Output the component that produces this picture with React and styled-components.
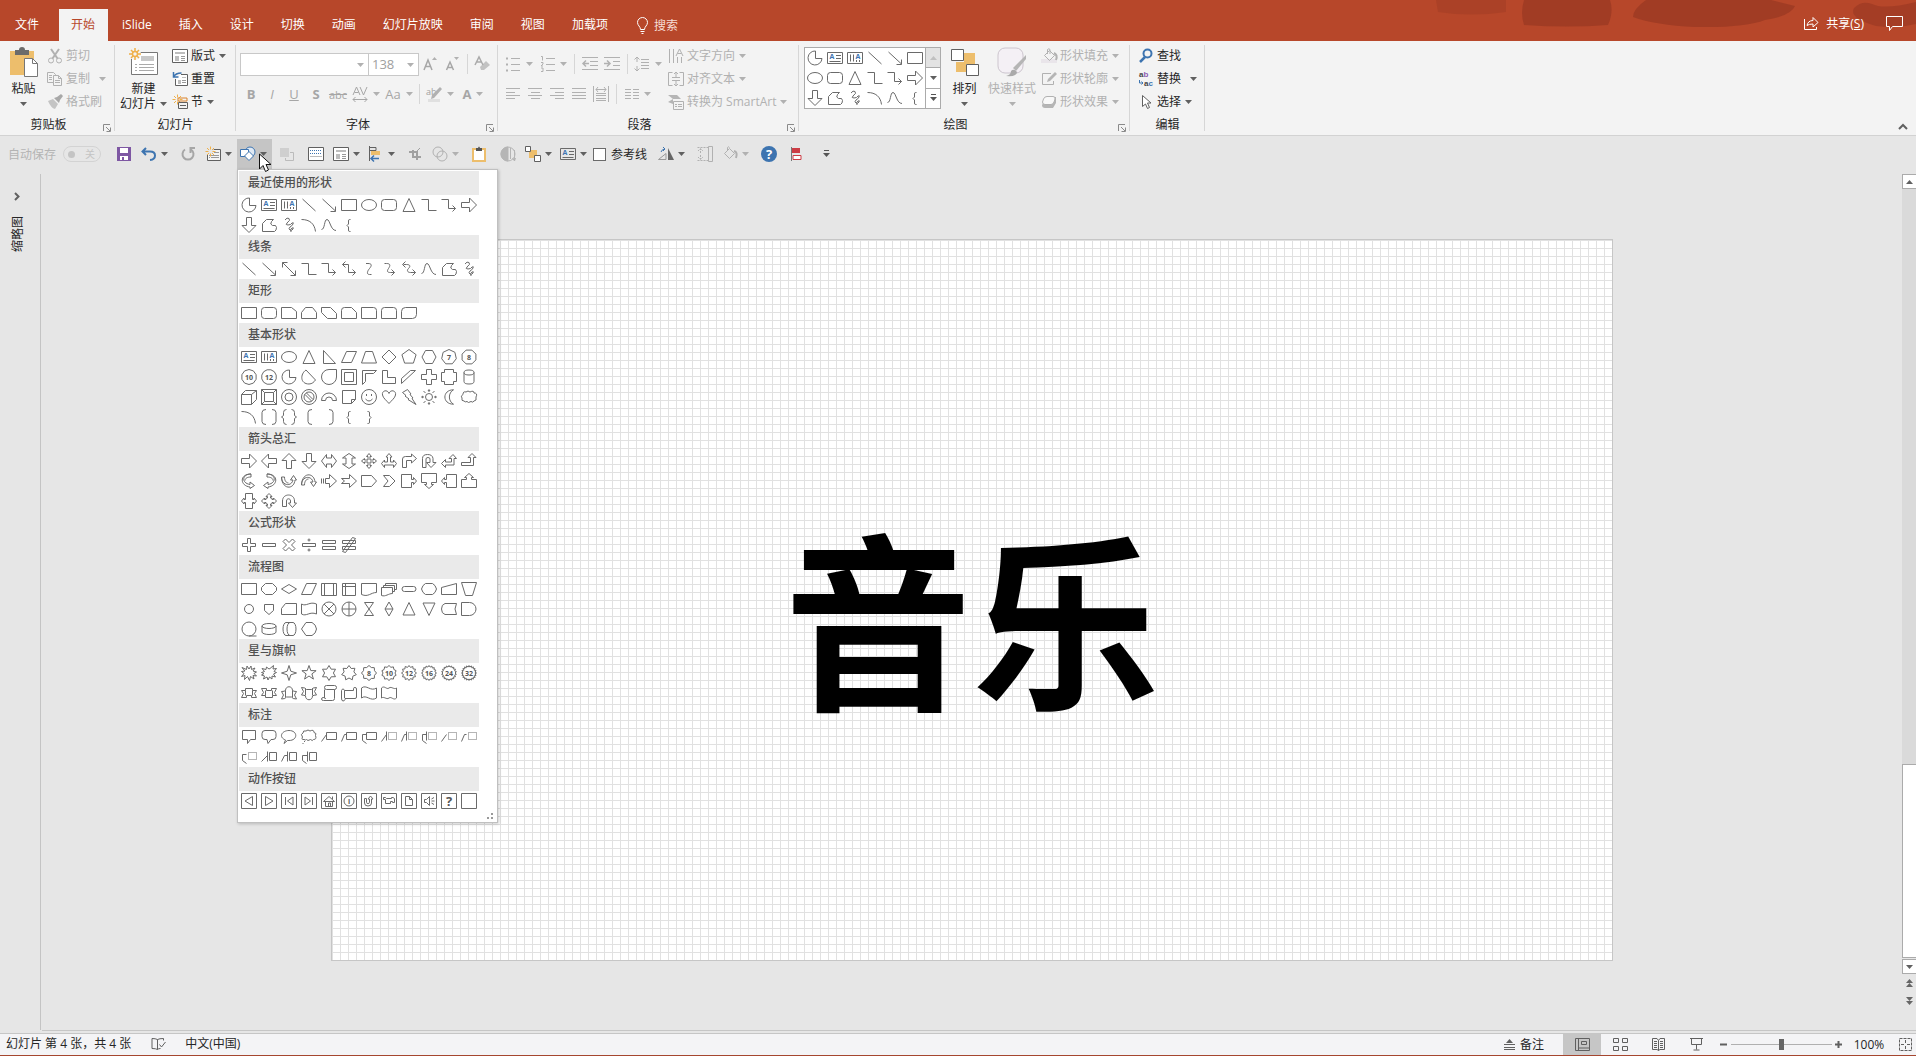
import React from 'react';
import styled, { createGlobalStyle } from 'styled-components';

const GlobalStyle = createGlobalStyle`
    *{
        box-sizing: border-box;
    }

    body{
        margin: 0;
        background: #e6e6e6;
        color: #262626;
        font-family: "Open Sans", "Noto Sans CJK SC", sans-serif;
        font-size: 12px;
        line-height: 15px;
    }

    button, select, input{
        font: inherit;
        color: inherit;
        margin: 0;
        padding: 0;
        border: 0;
        background: none;
        border-radius: 0;
    }

    svg{
        display: block;
        flex: none;
        overflow: visible;
    }
`;

const GREY = '#b1b1b1';
const DARK = '#606060';
const BLUE = '#3d74b0';
const GOLD = '#edbe6c';

/* ---------- title bar ---------- */

const Window = styled.div`
    display: flex;
    flex-direction: column;
    min-height: 100vh;
`;

const TitleBar = styled.header`
    position: relative;
    display: flex;
    align-items: flex-end;
    height: 41px;
    background: #b7472a;
    color: #fff;
`;

const Splash = styled.svg`
    position: absolute;
    top: 0;
    right: 0;
    overflow: hidden;
`;

const TabList = styled.nav`
    display: flex;
    gap: 2px;
    flex: 1;
`;

const Tab = styled.button`
    height: 32px;
    padding: 0 13px 2px 12px;
    white-space: nowrap;
    background: ${p => (p.$active ? '#f3f3f3' : 'transparent')};
    color: ${p => (p.$active ? '#b7472a' : '#fff')};
`;

const FileTab = styled(Tab)`
    width: 57px;
    padding: 0 18px 2px 15px;
`;

const Search = styled(Tab)`
    display: flex;
    align-items: center;
    gap: 5px;
    padding: 0 13px;
    color: #f6ddd6;
`;

const Share = styled.div`
    position: relative;
    display: flex;
    align-items: center;
    gap: 22px;
    height: 36px;
    padding-right: 13px;

    button{
        display: flex;
        align-items: center;
        gap: 7px;
    }
`;

/* ---------- ribbon ---------- */

const Ribbon = styled.section`
    display: flex;
    height: 95px;
    background: #f3f3f3;
    border-bottom: 1px solid #d2d2d2;
`;

const GroupBox = styled.div`
    position: relative;
    display: flex;
    flex-direction: column;
    width: ${p => p.$width}px;
    padding-top: 3px;

    &::after{
        content: '';
        position: absolute;
        top: 4px;
        right: 0;
        bottom: 4px;
        width: 1px;
        background: #d6d6d6;
    }
`;

const GroupBody = styled.div`
    display: flex;
    height: 69px;
    padding-left: ${p => p.$pad || 0}px;
`;

const GroupFoot = styled.div`
    position: relative;
    display: flex;
    align-items: center;
    justify-content: center;
    height: 22px;
    padding-right: ${p => (p.$launcher ? 18 : 0)}px;

    button{
        position: absolute;
        right: 4px;
        bottom: 3px;
    }
`;

const BigButton = styled.button`
    display: flex;
    flex-direction: column;
    align-items: center;
    width: ${p => p.$width}px;
    color: ${p => (p.$off ? GREY : 'inherit')};

    .pic{
        display: flex;
        align-items: center;
        height: 37px;
    }

    .line{
        display: flex;
        align-items: center;
        justify-content: center;
        gap: 4px;
        height: 15px;
        white-space: nowrap;
    }
`;

const Stack = styled.div`
    display: flex;
    flex-direction: column;
    padding-left: ${p => p.$pad || 0}px;
`;

const SmallButton = styled.button`
    display: flex;
    align-items: center;
    gap: 3px;
    height: 23px;
    white-space: nowrap;
    color: ${p => (p.$off ? GREY : 'inherit')};

    .caret{
        margin-left: ${p => (p.$wide ? 6 : 1)}px;
    }
`;

const Rows = styled.div`
    display: flex;
    flex-direction: column;
    padding-top: 5px;
`;

const Row = styled.div`
    display: flex;
    align-items: center;
    height: 30px;
`;

const Tool = styled.button`
    display: flex;
    align-items: center;
    justify-content: center;
    gap: 5px;
    width: ${p => p.$w || 22}px;
    height: 24px;
    color: #a6a6a6;
    font-size: 13px;

    s{
        font-size: 11px;
    }
`;

const Divider = styled.i`
    width: 1px;
    height: 20px;
    margin: 0 4px;
    background: #d6d6d6;
`;

const SelectBox = styled.label`
    position: relative;
    width: ${p => p.$width}px;
    height: 23px;
    margin-left: -1px;
    background: #fff;
    border: 1px solid #c8c8c8;

    select{
        width: 100%;
        height: 21px;
        padding: 0 3px;
        color: #a0a0a0;
        appearance: none;
        font-size: 13px;
    }

    svg{
        position: absolute;
        top: 9px;
        right: 4px;
    }
`;

const Gallery = styled.div`
    display: flex;
    width: 137px;
    height: 62px;
    margin-top: 3px;
    background: #fff;
    border: 1px solid #ababab;
`;

const ShapeGrid = styled.div`
    display: grid;
    grid-template-columns: repeat(${p => p.$cols}, 20px);
    grid-auto-rows: 20px;
    width: ${p => p.$cols * 20}px;
`;

const ShapeButton = styled.button`
    display: flex;
    align-items: center;
    justify-content: center;
`;

const GalleryScroll = styled.div`
    display: flex;
    flex-direction: column;
    flex: 1;
    border-left: 1px solid #ababab;

    button{
        display: flex;
        flex: 1;
        align-items: center;
        justify-content: center;
    }

    button + button{
        border-top: 1px solid #ababab;
    }

    button:first-child{
        background: #e3e3e3;
    }
`;

const Collapse = styled.button`
    align-self: flex-end;
    margin-left: auto;
    padding: 0 8px 4px;
`;

/* ---------- quick access toolbar ---------- */

const QuickBar = styled.div`
    display: flex;
    align-items: center;
    height: 36px;
    padding-left: 8px;
`;

const AutoSave = styled.div`
    display: flex;
    align-items: center;
    gap: 7px;
    width: 101px;
    color: #b4b4b4;
`;

const Switch = styled.button`
    display: flex;
    align-items: center;
    justify-content: space-between;
    width: 38px;
    height: 16px;
    padding: 0 5px 0 4px;
    border: 1px solid #d3d3d3;
    border-radius: 8px;
    color: #c4c4c4;
    font-size: 10px;
    line-height: 14px;

    &::before{
        content: '';
        width: 7px;
        height: 7px;
        border-radius: 50%;
        background: #c4c4c4;
    }
`;

const QuickButton = styled.button`
    display: flex;
    align-items: center;
    justify-content: ${p => (p.$split ? 'flex-start' : 'center')};
    gap: 4px;
    width: ${p => (p.$split ? 35 : 29)}px;
    height: 30px;
    padding-left: ${p => (p.$split ? 3 : 0)}px;
    background: ${p => (p.$open ? '#c5c5c5' : 'transparent')};
`;

const GuideCheck = styled.label`
    display: flex;
    align-items: center;
    gap: 5px;
    width: 63px;
    padding-left: 1px;
    white-space: nowrap;

    input{
        appearance: none;
        width: 13px;
        height: 13px;
        background: #fff;
        border: 1px solid #6a6a6a;
    }
`;

const MenuAnchor = styled.div`
    position: relative;
`;

const Menu = styled.div`
    position: absolute;
    z-index: 2;
    top: 30px;
    left: 0;
    width: 261px;
    padding: 1px 0 11px 1px;
    background: #fff;
    border: 1px solid #c0c0c0;
    box-shadow: 1px 1px 3px rgba(0, 0, 0, .2);

    h3{
        width: 240px;
        height: 24px;
        margin: 0;
        padding-left: 9px;
        background: #eaeaea;
        color: #505050;
        font-size: 12px;
        font-weight: 500;
        line-height: 24px;
    }
`;

const Grip = styled.svg`
    position: absolute;
    right: 3px;
    bottom: 2px;
`;

const Pointer = styled.svg`
    position: absolute;
    z-index: 3;
    top: 14px;
    left: 22px;
`;

/* ---------- work area ---------- */

const Main = styled.main`
    display: flex;
    flex: 1;
`;

const Thumbnails = styled.aside`
    display: flex;
    flex-direction: column;
    align-items: center;
    gap: 15px;
    width: 41px;
    margin-top: 2px;
    padding: 18px 6px 0 0;
    border-right: 1px solid #c4c4c4;

    span{
        writing-mode: vertical-rl;
        text-orientation: sideways;
        transform: rotate(180deg);
    }
`;

const Desk = styled.div`
    display: flex;
    flex: 1;
    padding: 67px 289px 69px 290px;
`;

const Slide = styled.div`
    display: flex;
    flex: 1;
    align-items: center;
    justify-content: center;
    border: 1px solid #c6c6c6;
    background-color: #fff;
    background-image:
        linear-gradient(to right, #e1e1e1 1px, transparent 1px),
        linear-gradient(to bottom, #e1e1e1 1px, transparent 1px);
    background-size: 8px 8px;

    h1{
        margin: 0;
        padding-top: 26px;
        color: #000;
        font-family: "Noto Sans CJK SC", sans-serif;
        font-size: 188px;
        font-weight: 700;
        line-height: 220px;
    }
`;

const ScrollBar = styled.div`
    display: flex;
    flex-direction: column;
    width: 14px;
    margin-top: 2px;
    padding-bottom: 20px;

    button{
        display: flex;
        align-items: center;
        justify-content: center;
        height: 18px;
    }

    .end{
        height: 15px;
        background: #fff;
        border: 1px solid #ababab;
        border-right: 0;
    }

    .track{
        flex: 3;
        background: #dadada;
    }

    .thumb{
        flex: 1;
        margin-bottom: 1px;
        background: #fff;
        border: 1px solid #ababab;
        border-right: 0;
    }
`;

/* ---------- status bar ---------- */

const PaneEdge = styled.div`
    height: 3px;
    margin-left: 42px;
    border-top: 1px solid #c6c6c6;
`;

const StatusBar = styled.footer`
    display: flex;
    align-items: stretch;
    height: 23px;
    background: #f4f4f6;
    border-top: 1px solid #c6c6c6;
    border-bottom: 1px solid #a5462f;
`;

const StatusText = styled.button`
    padding: 0 6px 2px;
    white-space: nowrap;
`;

const StatusButton = styled.button`
    display: flex;
    align-items: center;
    justify-content: center;
    gap: 5px;
    width: ${p => p.$w || 38}px;
    padding-bottom: 1px;
    background: ${p => (p.$active ? '#c6c6c6' : 'transparent')};
`;

const Spacer = styled.div`
    flex: 1;
`;

const Zoom = styled.input`
    appearance: none;
    width: 101px;
    height: 21px;

    &::-webkit-slider-runnable-track{
        height: 1px;
        background: #b0b0b0;
    }

    &::-webkit-slider-thumb{
        appearance: none;
        width: 5px;
        height: 11px;
        margin-top: -5px;
        background: #666;
    }
`;

/* ---------- drawings ---------- */

const point = (r, a) => `${(8 + r * Math.sin(a)).toFixed(1)} ${(8 - r * Math.cos(a)).toFixed(1)}`;

const star = (n, inner, outer = 7.5) => {
    const pts = [];
    for (let i = 0; i < n * 2; i++) {
        pts.push(point(i % 2 ? inner : outer, (Math.PI * i) / n));
    }
    return `M${pts.join('L')}z`;
};

const poly = (n, r = 7.5, turn = 0) => {
    const pts = [];
    for (let i = 0; i < n; i++) {
        pts.push(point(r, turn + (Math.PI * 2 * i) / n));
    }
    return `M${pts.join('L')}z`;
};

const circle = r => `M${8 - r} 8a${r} ${r} 0 1 0 ${r * 2} 0a${r} ${r} 0 1 0-${r * 2} 0z`;

const BOX = 'M.5 .5h15v15H.5z';

// d = outline, t = small caption, a = x of the blue letter, dash = dotted box
const shapes = {
    pie: 'M8.5 1A7 7 0 1 0 15 8.5H8.5z',
    textBox: { d: 'M.5 2.5h15v11H.5zM9 5.5h5M9 8.5h5M2.5 11.5h11', a: 5 },
    textBoxV: { d: 'M.5 2.5h15v11H.5zM3.5 4.5v7M6.5 4.5v7M9.5 10v2M12.5 10v2', a: 11 },
    line: 'M1.5 2l13 12',
    arrow: 'M1.5 2l13 12M14.5 9.5v5h-5',
    arrows: 'M1.5 1.5l13 13M14.5 9.5v5h-5M1.5 6.5v-5h5',
    rect: 'M.5 2.5h15v11H.5z',
    oval: 'M.5 8a7.5 5.5 0 1 0 15 0a7.5 5.5 0 1 0-15 0z',
    round: 'M3.5 2.5h9a3 3 0 0 1 3 3v5a3 3 0 0 1-3 3h-9a3 3 0 0 1-3-3v-5a3 3 0 0 1 3-3z',
    triangle: 'M8 1.5l6 13H2z',
    elbow: 'M.5 2.5h7v11h8',
    elbowArrow: 'M.5 2.5h7v9h7M11.5 8.5l3 3-3 3',
    elbowArrows: 'M1.5 3.5h6v8h7M11.5 8.5l3 3-3 3M4.5 .5l-3 3 3 3',
    right: 'M.5 5.5h8V1l7 7-7 7v-4.5h-8z',
    left: 'M15.5 5.5h-8V1l-7 7 7 7v-4.5h8z',
    up: 'M5.5 15.5v-8H1l7-7 7 7h-4.5v8z',
    down: 'M5.5 .5v8H1l7 7 7-7h-4.5v-8z',
    freeform: 'M1.5 14.5v-8l4-4h7l-2 2q-2 3 1 4 4-1 4 2t-2 4z',
    scribble: 'M4 3q2-3 4-1.5T6 6q-2 2 1 2t4-2q2-1 1 1T9 10q-2 2 0 3t3-1-1-1-1 4',
    arc: 'M.5 2.5c8 0 13 4 14 12',
    curve: 'M.5 12.5c3.5 0 2.5-10 5.5-10s3.5 11 9 11',
    braceL: 'M9.5 2.5h-1q-1 0-1 1.5v3L6 8.5 7.5 10v3q0 1.5 1 1.5h1',
    braceR: 'M6.5 2.5h1q1 0 1 1.5v3L10 8.5 8.5 10v3q0 1.5-1 1.5h-1',
    curved: 'M5 2.5h2c4 0 4 2 1.5 5s-3 6 0 6h2',
    curvedArrow: 'M3.5 2.5h2c4 0 4 2 2 5s-1 4 2 4h4M10.5 8.5l3 3-3 3',
    curvedArrows: 'M2.5 3.5h3c4 0 4 2 2 4s-1 4 2 4h5M11.5 8.5l3 3-3 3M4.5 .5l-3 3 3 3',
    snip1: 'M.5 2.5h10l5 4v7H.5z',
    snip2: 'M4.5 2.5h7l4 5v6H.5v-6z',
    snip3: 'M.5 2.5h9l6 6v5h-9l-6-6z',
    snipRound: 'M3.5 2.5h7l5 5v6H.5v-8a3 3 0 0 1 3-3z',
    round1: 'M.5 2.5h12a3 3 0 0 1 3 3v8H.5z',
    round2: 'M3.5 2.5h9a3 3 0 0 1 3 3v8H.5v-8a3 3 0 0 1 3-3z',
    round3: 'M4.5 2.5h11v7a4 4 0 0 1-4 4H.5v-7a4 4 0 0 1 4-4z',
    rtTriangle: 'M2.5 1.5v13h12z',
    parallel: 'M5.5 2.5h10l-5 11H.5z',
    trapezoid: 'M4.5 2.5h7l4 11.5H.5z',
    diamond: 'M8 1l7 7-7 7-7-7z',
    pentagon: poly(5),
    hexagon: 'M4.5 1.5h7L15 8l-3.5 6.5h-7L1 8z',
    hept: { d: poly(7), t: '7' },
    oct: { d: poly(8, 7.5, Math.PI / 8), t: '8' },
    deca: { d: poly(10), t: '10' },
    dodeca: { d: poly(12, 7.5, Math.PI / 12), t: '12' },
    chord: 'M5 1C-1 5-1 15 8 15c3 0 5-2 6.5-4z',
    tear: 'M15.5 .5H8A7.5 7.5 0 1 0 15.5 8z',
    frame: BOX + 'M3.5 3.5h9v9h-9z',
    halfFrame: 'M1.5 1.5h14l-3 3h-8v8l-3 3z',
    ell: 'M1.5 1.5h5v7h8v6h-13z',
    diagonal: 'M.5 9.5l9-8h5L.5 14.5z',
    cross: 'M5.5 .5h5v5h5v5h-5v5h-5v-5h-5v-5h5z',
    plaque: 'M3.5 .5h9v3h3v9h-3v3h-9v-3h-3v-9h3z',
    can: 'M3 3.5a5 2.5 0 1 0 10 0a5 2.5 0 1 0-10 0v9a5 2.5 0 0 0 10 0v-9',
    cube: 'M.5 5.5h10v10H.5zM.5 5.5l4-4h11l-5 4M15.5 1.5v9l-5 5',
    bevel: BOX + 'M3.5 3.5h9v9h-9zM.5 .5l3 3M15.5 .5l-3 3M.5 15.5l3-3M15.5 15.5l-3-3',
    donut: circle(7.5) + circle(4),
    no: circle(7.5) + circle(5) + 'M4 5.5l6.5 6.5M5.5 4l6.5 6.5',
    blockArc: 'M.5 11.5a7.5 7.5 0 0 1 15 0h-4a3.5 3.5 0 0 0-7 0z',
    fold: 'M1.5 1.5h13v9l-4 4h-9zM10.5 14.5v-4h4',
    smile: circle(7.5) + 'M4.5 10q3.5 4 7 0M5.5 5v2M10.5 5v2',
    heart: 'M8 4.5C6.5 0 .5 1.5 1.5 6c.5 3 4 5.5 6.5 8.5 2.5-3 6-5.5 6.5-8.5C15.5 1.5 9.5 0 8 4.5z',
    bolt: 'M6.5 .5l-5 3 3.5 3-1 .5 4 3-1 .5 8 5-4-6 1-.5-3-3.5 1-.5z',
    sun: circle(3.5) + 'M7 2h2L8 .5zM7 14h2l-1 1.5zM2 7v2L.5 8zM14 7v2l1.5-1zM2.5 2.5l2 1M13.5 2.5l-2 1M2.5 13.5l2-1M13.5 13.5l-2-1',
    moon: 'M12.5 .8C1 .8 1 15.2 12.5 15.2c-5.5-3-5.5-11.4 0-14.4z',
    cloud: 'M3 12Q0 12 1 9-1 7 2 5.5 2 2 5 3q2-2 4 0 4-2 4 1 4 0 2 4 1 4-2 4-1 2-3 .5-3 2-4 0-2 1-3-.5z',
    brackets: 'M5 .5q-4 0-4 3v9q0 3 4 3M11 .5q4 0 4 3v9q0 3-4 3',
    braces: 'M5.5 .5q-3 0-3 3v3l-2 1.5 2 1.5v3q0 3 3 3M10.5 .5q3 0 3 3v3l2 1.5-2 1.5v3q0 3-3 3',
    bracketL: 'M11 .5q-4 0-4 3v9q0 3 4 3',
    bracketR: 'M8 .5q4 0 4 3v9q0 3-4 3',
    leftRight: 'M.5 8l5-6.5V5h5V1.5l5 6.5-5 6.5V11h-5v3.5z',
    upDown: 'M8 .5L14.5 5H11v6h3.5L8 15.5 1.5 11H5V5H1.5z',
    quad: 'M8 .5l2.5 3H9V7h3.5V5.5l3 2.5-3 2.5V9H9v3.5h1.5L8 15.5l-2.5-3H7V9H3.5v1.5L.5 8l3-2.5V7H7V3.5H5.5z',
    threeWay: 'M8 .5L11 4H9.5v5h3V7l3 3.5-3 4V12h-9v2.5l-3-4 3-3.5v2h3V4H5z',
    bent: 'M1.5 14.5V6q0-2.5 3-2.5h6V1l5 4.5-5 4.5V7.5h-5v7z',
    uturn: 'M1.5 14.5v-9q0-4 5-4t5.5 4v4h3l-5 5-4.5-5H9V6q0-1.5-2-1.5T5 6v8.5z',
    leftUp: 'M.5 10.5l4-4V9h6V5.5H8l4-4 3.5 4H13V12H4.5v2.5z',
    bentUp: 'M.5 9.5h9v-5H7l4-4 4 4h-2.5v8H.5z',
    curveR: 'M10 1C1 1 0 10 9 11.5V9l4.5 3.5-4.5 3V14C-1 13-2 1 10 1zM10 1v3C6 4 4 5.5 4 7.5',
    curveL: 'M6 1c9 0 10 9 1 10.5V9l-4.5 3.5 4.5 3V14c10-1 11-13-1-13zM6 1v3c4 0 6 1.5 6 3.5',
    curveU: 'M.5 4c0 9 10 10 11.5 3H9.5l3-4.5 3 4.5H14c-1 10-13 10-13.5-3h3c0 4 2 6 4 6',
    curveD: 'M.5 12c0-9 10-10 11.5-3H9.5l3 4.5 3-4.5H14C13-1 1-1 .5 12h3c0-4 2-6 4-6',
    striped: 'M.5 5.5v5M2.5 5.5v5M4.5 5.5h4v-4l7 6.5-7 6.5v-4h-4z',
    notched: 'M.5 5.5h8v-4l7 6.5-7 6.5v-4h-8l3-2.5z',
    homePlate: 'M.5 2.5h10l5 5.5-5 5.5H.5z',
    chevron: 'M2.5 2.5h6L14 8l-5.5 5.5h-6L7 8z',
    calloutR: 'M.5 1.5h10v5h2v-2l3 3.5-3 3.5v-2h-2v5H.5z',
    calloutD: 'M.5 .5h15v9h-5v2h2L8 15.5l-4.5-4h2v-2h-5z',
    calloutL: 'M15.5 1.5h-10v5h-2v-2L.5 8l3 3.5v-2h2v5h10z',
    calloutU: 'M.5 14.5h15v-8h-5v-2h2L8 .5l-4.5 4h2v2h-5z',
    calloutLR: 'M4.5 .5h7v6H13V5l2.5 3-2.5 3V9.5h-1.5v6h-7v-6H3V11L.5 8 3 5v1.5h1.5z',
    calloutQ: 'M8 .5l3 3H9.5V5H11v1.5h1.5V5l3 3-3 3V9.5H11V11H9.5v1.5H11l-3 3-3-3h1.5V11H5V9.5H3.5V11l-3-3 3-3v1.5H5V5h1.5V3.5H5z',
    circular: 'M1.5 13.5V8c0-8 12-8 12 0v2h2l-4 4.5-4-4.5h2V8c0-3-4-3-4 0v5.5z',
    plus: 'M6.5 1.5h3v5h5v3h-5v5h-3v-5h-5v-3h5z',
    minus: 'M1.5 6.5h13v3h-13z',
    times: 'M4.5 2L8 5.5 11.5 2 14 4.5 10.5 8l3.5 3.5-2.5 2.5L8 10.5 4.5 14 2 11.5 5.5 8 2 4.5z',
    divide: 'M1.5 6.5h13v3h-13zM7 3a1 1 0 1 0 2 0a1 1 0 1 0-2 0zM7 13a1 1 0 1 0 2 0a1 1 0 1 0-2 0z',
    equals: 'M1.5 3.5h13v3h-13zM1.5 9.5h13v3h-13z',
    notEquals: 'M1.5 3.5h13v3h-13zM1.5 9.5h13v3h-13zM11.5 .5l3 1-10 14-3-1z',
    alt: 'M4.5 2.5h7l4 4v3l-4 4h-7l-4-4v-3z',
    decision: 'M8 3.5L15.5 8 8 12.5.5 8z',
    predefined: 'M.5 2.5h15v12H.5zM3.5 2.5v12M12.5 2.5v12',
    internal: 'M1.5 2.5h13v12h-13zM4.5 2.5v12M1.5 5.5h13',
    document: 'M.5 2.5h15v9c-6 0-8 5-15 2z',
    multiDoc: 'M.5 6.5h11v6c-4 0-7 3.5-11 2zM2.5 6.5v-2h11v6h-2M4.5 4.5v-2h11v6h-2',
    terminator: 'M3.5 5.5h9a2.5 2.5 0 0 1 0 5h-9a2.5 2.5 0 0 1 0-5z',
    prep: 'M4.5 2.5h7q3 1.5 4 5.5-1 4-4 5.5h-7q-3-1.5-4-5.5 1-4 4-5.5z',
    manualIn: 'M.5 6.5l15-4v11H.5z',
    manualOp: 'M.5 1.5h15l-4 13h-7z',
    connector: circle(4.5),
    offPage: 'M3.5 3.5h9v6l-4.5 4-4.5-4z',
    card: 'M4.5 2.5h11v11H.5v-6z',
    tape: 'M.5 3c5 3 8-3 15 0v10c-7-3-10 3-15 0z',
    sumJunction: circle(7) + 'M3 3l10 10M13 3L3 13',
    or: circle(7) + 'M8 1v14M1 8h14',
    collate: 'M3.5 1.5h9l-9 13h9z',
    sort: 'M8 1l4 7-4 7-4-7zM4 8h8',
    extract: 'M8 1.5L14 14H2z',
    merge: 'M2 2h12L8 14.5z',
    stored: 'M4 2.5h11.5q-3 5.5 0 11H4Q.5 12.5 .5 8T4 2.5z',
    delay: 'M.5 1.5h8a6.5 6.5 0 0 1 0 13h-8z',
    seqStore: circle(7) + 'M8 15h7.5',
    disk: 'M1 5a7 2.5 0 1 0 14 0a7 2.5 0 1 0-14 0v6a7 2.5 0 0 0 14 0V5',
    directStore: 'M5 1.5h7a3 6.5 0 0 1 0 13H5a3 6.5 0 0 1 0-13zM9 1.5a3 6.5 0 0 0 0 13',
    display: 'M5 1.5h6q4 2 4.5 6.5-.5 4.5-4.5 6.5H5L.5 8z',
    burst1: 'M8 4l2-3 .5 3.5L14 3l-2 3 3.5 1L13 8.5l2.5 2.5-3.5-.5 1 3.5-3.5-2.5-1 4-2-4-3 3 .5-4-3.5 1L3 8.5.5 6.5 4 6 1 2.5l4.5 2L6 1z',
    burst2: 'M9 3.5l3.5-3L12 4l3.5-.5L13 6.5l2.5 1-3 1.5 2 3-3.5-1v3L8.5 12 7 15l-1-3-3.5 2 1-3-3-1L3 8.5l-2.5-1 3-1L1 3.5l4 1L5.5 2 8 4z',
    star4: star(4, 2.6),
    star5: star(5, 3),
    star6: star(6, 4.4),
    star7: star(7, 5),
    star8: { d: star(8, 6), t: '8' },
    star10: { d: star(10, 6), t: '10' },
    star12: { d: star(12, 5.8), t: '12' },
    star16: { d: star(16, 6), t: '16' },
    star24: { d: star(18, 6), t: '24' },
    star32: { d: star(20, 6), t: '32' },
    ribbonUp: 'M.5 5.5h4v-2h7v2h4l-2 3 2 4h-5v-2h-5v2h-5l2-4zM4.5 5.5v5M11.5 5.5v5',
    ribbonDown: 'M.5 3.5h5v2h5v-2h5l-2 4 2 3h-4v2h-7v-2h-4l2-3zM4.5 5.5v5M11.5 5.5v5',
    ribbonCurveUp: 'M.5 6.5q3 0 4-1c0-5 7-5 7 0q1 1 4 1l-2 3.5 2 4q-4 0-5-2h-5q-1 2-5 2l2-4zM4.5 5.5v7M11.5 5.5v7',
    ribbonCurveDown: 'M.5 2.5q4 0 5 2h5q1-2 5-2l-2 4 2 3.5q-3 0-4 1c0 5-7 5-7 0q-1-1-4-1l2-3.5zM4.5 3.5v7M11.5 3.5v7',
    scrollV: 'M3.5 4.5v8h-1q-2 0-2 1.5t2 1.5h9q2 0 2-2v-9h-8q-2 0-2-2t2-2h8q2 0 2 2t-2 2M2.5 12.5q2 0 2 1.5',
    scrollH: 'M3.5 5.5h9v-2q0-1 1.5-1t1.5 1.5v8q0 1.5-1.5 1.5H4v1q-.5 1.5-2 1.5T.5 13V5.5Q1 4 2 4t1.5 1.5V13',
    wave: 'M.5 3c5-4 9 4 15 0v10c-6 4-10-4-15 0z',
    doubleWave: 'M.5 3c3-3 5 2 7.5 0s5 2 7.5 0v10c-3 3-5-2-7.5 0s-5-2-7.5 0z',
    callRect: 'M1.5 1.5h13v9h-5l-3 4v-4h-5z',
    callRound: 'M4 1.5h8q3 0 3 3v3q0 3-3 3h-2l-3 4-1-4H4q-3 0-3-3v-3q0-3 3-3z',
    callOval: 'M3 14.5L4.5 11C-3 8 1 1.5 8 1.5c9 0 9 10 0 10H6.5z',
    callCloud: 'M3 10.5Q0 11 1.5 8-1 5 2 4q0-3 3-2 2-2 4 0 4-2 4 1.5 3 .5 1.5 3 1.5 4-2 4-1 2-3 0-3 2-4 0-1 1-2.500 0zM1.5 14.5h1M3 12.5h1',
    line1: 'M5.5 3.5h10v7h-10zM5.5 5.5l-5 7',
    line2: 'M5.5 3.5h10v7h-10zM5.5 5.5h-2l-3 7',
    line3: 'M5.5 3.5h10v7h-10zM5.5 5.5h-4v6l4 3',
    accent1: { d: 'M5.5 2.5v9M5.5 5.5l-5 7', dash: 1 },
    accent2: { d: 'M5.5 2.5v9M5.5 5.5h-2l-3 7', dash: 1 },
    accent3: { d: 'M5.5 2.5v9M5.5 5.5h-4v6l4 3', dash: 1 },
    bare1: { d: 'M5.5 5.5l-5 7', dash: 1 },
    bare2: { d: 'M5.5 5.5h-2l-3 7', dash: 1 },
    bare3: { d: 'M5.5 5.5h-4v6l4 3', dash: 1 },
    both1: 'M8.5 3.5h7v8h-7zM6.5 2.5v10M6.5 6.5l-6 6',
    both2: 'M8.5 3.5h7v8h-7zM6.5 2.5v10M6.5 6.5h-3l-3 6',
    both3: 'M8.5 3.5h7v8h-7zM6.5 2.5v10M6.5 6.5h-5v5l4 3',
    actBack: BOX + 'M11.5 3.5v9L4 8z',
    actNext: BOX + 'M4.5 3.5v9L12 8z',
    actFirst: BOX + 'M12 4v8L6.5 8zM4.5 4v8',
    actLast: BOX + 'M4 4v8l5.5-4zM11.5 4v8',
    actHome: BOX + 'M2.5 8.5l5.5-5 5.5 5zM4.5 8.5v5h7v-5M7.5 13v-3h2v3M11.5 6V3.5',
    actInfo: { d: BOX + circle(5), t: 'i' },
    actReturn: BOX + 'M3.5 5.5h2v4q0 1 1.5 1t1.5-1V6H7l2.5-3L12 6h-1.5v4q0 3-3.5 3t-3.5-3z',
    actMovie: BOX + 'M2.5 4.5h2l1 1h5v-1H12l1.5 1v4h-2v-1h-2v2h-5v-4h-2z',
    actDoc: BOX + 'M4.5 3.5h4l3 3v6h-7zM8.5 3.5v3h3',
    actSound: BOX + 'M3.5 6.5h2l3-3v9l-3-3h-2zM10.5 8h3M10.5 6L13 4.5M10.5 10l2.5 1.5',
    actHelp: { d: BOX, t: '?', big: 1 },
    actBlank: BOX,
};

const recent = 'pie textBox textBoxV line arrow rect oval round triangle elbow elbowArrow right down freeform scribble arc curve braceL';

const sections = [
    ['最近使用的形状', recent],
    ['线条', 'line arrow arrows elbow elbowArrow elbowArrows curved curvedArrow curvedArrows curve freeform scribble'],
    ['矩形', 'rect round snip1 snip2 snip3 snipRound round1 round2 round3'],
    ['基本形状', 'textBox textBoxV oval triangle rtTriangle parallel trapezoid diamond pentagon hexagon hept oct deca dodeca pie chord tear frame halfFrame ell diagonal cross plaque can cube bevel donut no blockArc fold smile heart bolt sun moon cloud arc brackets braces bracketL bracketR braceL braceR'],
    ['箭头总汇', 'right left up down leftRight upDown quad threeWay bent uturn leftUp bentUp curveR curveL curveU curveD striped notched homePlate chevron calloutR calloutD calloutL calloutU calloutLR calloutQ circular'],
    ['公式形状', 'plus minus times divide equals notEquals'],
    ['流程图', 'rect alt decision parallel predefined internal document multiDoc terminator prep manualIn manualOp connector offPage card tape sumJunction or collate sort extract merge stored delay seqStore disk directStore display'],
    ['星与旗帜', 'burst1 burst2 star4 star5 star6 star7 star8 star10 star12 star16 star24 star32 ribbonUp ribbonDown ribbonCurveUp ribbonCurveDown scrollV scrollH wave doubleWave'],
    ['标注', 'callRect callRound callOval callCloud line1 line2 line3 accent1 accent2 accent3 bare1 bare2 bare3 both1 both2 both3'],
    ['动作按钮', 'actBack actNext actFirst actLast actHome actInfo actReturn actMovie actDoc actSound actHelp actBlank'],
];

const Shape = ({ name }) => {
    const raw = shapes[name];
    const s = typeof raw === 'string' ? { d: raw } : raw;
    return (
        <svg width="16" height="16" viewBox="0 0 16 16" fill="none" stroke="#6a6a6a">
            <path d={s.d} />
            {s.dash && <path d="M7.5 3.5h8v7h-8z" strokeDasharray="1 1" />}
            {s.a && <text x={s.a} y="9" fontSize="7" fontWeight="700" textAnchor="middle" fill={BLUE} stroke="none">A</text>}
            {s.t && (
                <text x="8" y={s.big ? 13 : 11} fontSize={s.big ? 13 : 7} fontWeight="700" textAnchor="middle" fill="#555" stroke="none">{s.t}</text>
            )}
        </svg>
    );
};

const Shapes = ({ list, cols }) => (
    <ShapeGrid $cols={cols}>
        {list.split(' ').map((name, i) => (
            <ShapeButton key={i} aria-label={name}><Shape name={name} /></ShapeButton>
        ))}
    </ShapeGrid>
);

const Icon = ({ w = 16, h = 16, c = DARK, fill = 'none', children }) => (
    <svg width={w} height={h} viewBox={`0 0 ${w} ${h}`} fill={fill} stroke={c}>{children}</svg>
);

const Caret = ({ c = DARK, up }) => (
    <svg className="caret" width="7" height="4" viewBox="0 0 7 4" fill={c}>
        <path d={up ? 'M0 4h7L3.5 0z' : 'M0 0h7L3.5 4z'} />
    </svg>
);

const Burst = () => <path d="M5.5 .5v3M5.5 7.5v3M.5 5.5h3M7.5 5.5h3M2 2l2 2M9 2L7 4M2 9l2-2M9 9L7 7" stroke="#efb04a" />;

const icons = {
    paste: (
        <Icon w={28} h={31}>
            <path d="M0 4h24v24H0z" fill={GOLD} stroke="none" />
            <path d="M5 3h4q0-3 3-3t3 3h4v5H5z" fill="#6b6b6b" stroke="none" />
            <path d="M14.5 11.5h8l5 5v13h-13z" fill="#fff" stroke="#777" />
            <path d="M22.5 11.5v5h5" stroke="#777" />
        </Icon>
    ),
    cut: (
        <Icon c={GREY}>
            <path d="M4 1l6.5 9.5M12 1L5.5 10.5" strokeWidth="2" />
            <circle cx="4" cy="12.5" r="2.5" /><circle cx="12" cy="12.5" r="2.5" />
        </Icon>
    ),
    copy: <Icon c={GREY}><path d="M6.5 11.5h-6v-10h6l2 2v1M2 4.5h3M2 6.5h3M2 8.5h3M6.5 4.5h5l3 3v7h-8zM11.5 4.5v3h3M8 9.5h5M8 11.5h5" /></Icon>,
    brush: <Icon c="none"><path d="M1 7l5-2 5 5-3 5q-4-1-7-8z" fill="#c4c4c4" /><path d="M7 4l3-1 4-3 2 2-3 4-1 3z" fill="#a8a8a8" /></Icon>,
    newSlide: (
        <Icon w={30} h={31}>
            <path d="M2.5 5.5h26v22h-26z" fill="#fff" stroke="#777" />
            <path d="M12 9h13v5H12z" fill="#c8c8c8" stroke="none" />
            <path d="M6 17.5h2M10 17.5h15M6 20.5h2M10 20.5h15M6 23.5h2M10 23.5h15" stroke="#aaa" />
            <circle cx="6" cy="7" r="6" fill="#f3f3f3" stroke="none" />
            <circle cx="6" cy="7" r="2.5" stroke="#efb04a" strokeWidth="1.5" />
            <path d="M6 1v3M6 10v3M0 7h3M9 7h3M2 3l2 2M10 3L8 5M2 11l2-2M10 11L8 9" stroke="#efb04a" strokeWidth="1.5" />
        </Icon>
    ),
    layout: (
        <Icon>
            <path d="M.5 1.5h15v13H.5z" fill="#fff" />
            <path d="M3 4h10v2H3zM3 8h4v5H3z" fill="#bdbdbd" stroke="none" />
            <path d="M9 8.5h4M9 10.5h4M9 12.5h4" stroke="#999" />
        </Icon>
    ),
    reset: (
        <Icon>
            <path d="M9 3.5h6.5v11h-12V8" fill="#fff" />
            <path d="M6 9h3v4H6zM10 6h4v1h-4z" fill="#bdbdbd" stroke="none" /><path d="M10 9.5h4M10 11.5h4" stroke="#999" />
            <path d="M1.5 1v5h5M1.5 6q2-4 8-4" stroke={BLUE} strokeWidth="1.5" />
        </Icon>
    ),
    section: (
        <Icon>
            <Burst />
            <path d="M6 4h9v3H6z" stroke="#d9822b" /><path d="M6.5 8.5h9v6h-9zM8 11.5h6" />
        </Icon>
    ),
    find: <Icon><circle cx="9.5" cy="5.5" r="4" stroke={BLUE} strokeWidth="2" /><path d="M7 9l-5 5" stroke={BLUE} strokeWidth="2.5" /></Icon>,
    replace: (
        <Icon c="none">
            <g fontFamily="Liberation Sans" fontSize="8" fontWeight="700" fill="#444">
                <text x="1" y="6">a<tspan fill="#8b5bb0">b</tspan></text>
                <text x="6" y="15">a<tspan fill={BLUE}>c</tspan></text>
            </g>
            <path d="M1.5 9v3h3M3.5 10.5L5 12l-1.5 1.5" stroke={BLUE} />
        </Icon>
    ),
    select: <Icon><path d="M4.5 1.5v11l3-2.5 2 4.5 2-1-2-4.5H13z" fill="#fff" /></Icon>,
    arrange: (
        <Icon w={28} h={30}>
            <path d="M13 5h11v11H13zM5 14h10v10H5z" fill={GOLD} stroke="none" />
            <path d="M.5 1.5h12v11H.5zM15.5 16.5h12v11h-12z" fill="#fff" />
        </Icon>
    ),
    styles: (
        <Icon w={30} h={31} c={GREY}>
            <rect x="1" y="1" width="25" height="25" rx="7" fill="#f4f0f5" stroke="#ccc5ce" />
            <path d="M29 8L16 21l3 3 10-12z" fill="#b5b5b5" stroke="none" />
            <path d="M9 29q5-1 5-5 3-3 6 1 0 5-11 4z" fill="#aaa" stroke="none" />
        </Icon>
    ),
    fill: (
        <Icon c={GREY}>
            <path d="M0 11h16v4H0z" fill="#e9e5ea" stroke="none" />
            <path d="M3.5 7.5l5-5 5 5-5 5zM6.5 6V1.5Q8 0 9 1.5V6" /><path d="M13 5q4 2 2 7" strokeWidth="2" />
        </Icon>
    ),
    outline: <Icon c={GREY}><path d="M10 2.5H1.5v11h11V10" /><path d="M6 11l1-3 7-7 2 2-7 7z" fill="#b5b5b5" stroke="none" /></Icon>,
    effect: <Icon c={GREY}><path d="M6 3h9v6l-3 5H4q-3 0-3-3z" fill="#b5b5b5" stroke="none" /><path d="M6 2.5h6q2.5 0 2 2.5l-1 3q-1 2.5-3 2.5H4Q1.5 10.5 1.5 8l1-3Q3.5 2.5 6 2.5z" fill="#f8f8f8" /></Icon>,
    textDir: <Icon c={GREY}><path d="M1.5 1v14M5.5 1v14M9.5 9v6M13.5 9v6M8 8l3.5-7L15 8M9.5 5.5h4" /></Icon>,
    alignText: <Icon c={GREY}><path d="M4.5 1.5h-4v13h4M11.5 1.5h4v13h-4M4 6.5h8M4 9.5h8M8 6.5V1M6 3l2-2 2 2M8 10v5M6 13l2 2 2-2" /></Icon>,
    smartArt: <Icon c={GREY}><path d="M0 1h9l4 4H5zM0 8l5-3v5z" fill="#b5b5b5" stroke="none" /><path d="M5.5 7.5h10v8h-10zM7 10.5h2M10 10.5h4M7 12.5h2M10 12.5h4" /></Icon>,
    bullets: <Icon w={15} c={GREY}><path d="M5 2.5h9M5 8.5h9M5 14.5h9" /><path d="M0 1.5h2v2H0zM0 7.5h2v2H0zM0 13.5h2v2H0z" fill={GREY} stroke="none" /></Icon>,
    numbers: <Icon w={15} c={GREY}><path d="M6 2.5h9M6 8.5h9M6 14.5h9M1 .5h1.5v4M1 6.5h2V8l-2 2h2M1 12h2v3.5H1" /></Icon>,
    dedent: <Icon c={GREY}><path d="M0 1.5h16M8 5.5h8M8 9.5h8M0 13.5h16" /><path d="M1 7.5h6M4 4.5l-3 3 3 3" strokeWidth="1.5" /></Icon>,
    indent: <Icon c={GREY}><path d="M0 1.5h16M9 5.5h7M9 9.5h7M0 13.5h16" /><path d="M0 7.5h6M3 4.5l3 3-3 3" strokeWidth="1.5" /></Icon>,
    spacing: <Icon c={GREY}><path d="M7 3.5h8M7 6.5h8M7 9.5h8M7 12.5h8M3 1v5M.5 3.5L3 1l2.5 2.5M3 15v-5M.5 12.5L3 15l2.5-2.5" /></Icon>,
    alignL: <Icon w={15} h={12} c={GREY}><path d="M0 .5h14M0 4.5h9M0 7.5h14M0 10.5h9" /></Icon>,
    alignC: <Icon w={15} h={12} c={GREY}><path d="M0 .5h14M3 4.5h9M0 7.5h14M3 10.5h9" /></Icon>,
    alignR: <Icon w={15} h={12} c={GREY}><path d="M0 .5h14M5 4.5h9M0 7.5h14M5 10.5h9" /></Icon>,
    justify: <Icon w={15} h={12} c={GREY}><path d="M0 .5h14M0 4.5h14M0 7.5h14M0 10.5h14" /></Icon>,
    spread: <Icon c={GREY}><path d="M.5 0v16M15.5 0v16M3 7.5h10M3 9.5h10M3 12.5h10M3 14.5h10M3 3.5h10M5 1L3 3.5 5 6M11 1l2 2.5L11 6" /></Icon>,
    columns: <Icon w={14} h={12} c={GREY}><path d="M0 1.5h6M0 4.5h6M0 7.5h6M0 10.5h6M8 1.5h6M8 4.5h6M8 7.5h6M8 10.5h6" /></Icon>,
    eraser: <Icon c="none"><path d="M5 11l6-6 4 4-6 5H6z" fill="#c2c2c2" /><path d="M0 9L4 1l4 8M2 6h4" stroke="#aaa" strokeWidth="1.5" /></Icon>,
    marker: <Icon c="none"><text x="0" y="9" fontSize="9" fill="#a0a0a0">ab</text><path d="M14 1l2 2-8 9-3 1 1-4z" fill="#b1b1b1" /><path d="M2 13h12v3H2z" fill="#e0e0e0" /></Icon>,
    kerning: <Icon c="#a6a6a6"><path d="M1 9l3.5-8L8 9M2.5 6.5h4M8 1l3.5 8L15 1M1 13.5h14M3.5 11L1 13.5 3.5 16M12.5 11l2.5 2.5-2.5 2.5" /></Icon>,
    save: <Icon w={14} h={14} c="none"><path d="M0 0h14v14H0z" fill="#7e57a3" /><path d="M3 1h8v5H3zM3 9h8v4H3z" fill="#fff" /><path d="M5 10h2v3H5z" fill="#7e57a3" /></Icon>,
    undo: <Icon c={BLUE}><path d="M5 2L1.5 5.5 5 9M2 5.5h7q5 0 5 4T9 14" strokeWidth="2" /></Icon>,
    redo: <Icon c="#a6a6a6"><path d="M11 3.5A5.5 5.5 0 1 1 5 3.5M10.5 7V2H15" strokeWidth="2" /></Icon>,
    newSmall: <Icon><path d="M2.5 3.5h13v11h-13z" fill="#f4f4f4" /><path d="M4 9.5h1M6 9.5h8M4 11.5h1M6 11.5h8M9 6.5h5" stroke="#999" /><circle cx="5" cy="5" r="4" fill="#e6e6e6" stroke="none" /><Burst /></Icon>,
    shapes: (
        <Icon c={BLUE}>
            <circle cx="10" cy="6" r="5" fill="#dfe9f4" />
            <path d="M.5 3.5h8v7h-8z" fill="#fff" /><path d="M9 5.5l4.5 4.5L9 14.5 4.5 10z" fill="#fff" />
        </Icon>
    ),
    back: <Icon c="none"><path d="M1 2h9v9H1z" fill="#cfcfcf" /><path d="M11 6.5h3.5v8h-8V12" stroke="#bbb" /></Icon>,
    pane: <Icon><path d="M.5 1.5h15v13H.5z" fill="#fff" /><path d="M2 4.5h12M2 7.5h12" stroke={BLUE} strokeDasharray="1 1" /><path d="M2 10.5h12" stroke="#bbb" /></Icon>,
    align: <Icon><path d="M1.5 0v15M2 1.5h6v3H2" /><path d="M3 5h9v4H3z" fill={GOLD} stroke="none" /><path d="M3 12.5h8M6 9.5l-3 3 3 3" stroke={BLUE} strokeWidth="1.5" /></Icon>,
    crop: <Icon c="#a0a0a0"><path d="M6 4v7h8M2 6h8v8" strokeWidth="2" /><path d="M10 5l3-3" /></Icon>,
    union: <Icon c={GREY}><circle cx="6" cy="6" r="5" /><circle cx="10" cy="10" r="5" /></Icon>,
    clip: <Icon w={14} c="none"><path d="M1 3h12v12H1z" fill="#fff" stroke={GOLD} strokeWidth="2" /><path d="M4 2h2q1-3 2 0h2v3H4z" fill="#555" /></Icon>,
    contrast: <Icon c="#b5b5b5"><circle cx="8" cy="8" r="7" /><path d="M8 1a7 7 0 0 0 0 14z" fill="#b5b5b5" /><path d="M10.5 2v11M14.5 4v11M12.5 12l2 3 1-3" /></Icon>,
    arrangeSmall: <Icon><path d="M4 4h8v8H4z" fill={GOLD} stroke="none" /><path d="M.5 .5h5v5h-5zM9.5 9.5h6v6h-6z" fill="#fff" /></Icon>,
    flip: <Icon c="none"><path d="M10 2l6 12h-6z" fill="#666" /><path d="M8 7.5v6H.5z" stroke="#999" /><path d="M3 6q1-3 4-3M5 1l2 2-2 2" stroke={BLUE} /></Icon>,
    size: <Icon c={GREY}><path d="M.5 1.5h11M.5 14.5h11M3.5 7V3M1 5l2.5-2.5L6 5M3.5 9v4M1 11l2.5 2.5L6 11" strokeDasharray="2 1" /><path d="M11.5 .5h4v15h-4z" /></Icon>,
    bucket: <Icon c={GREY}><path d="M2.5 7.5l5-5 5 5-5 5zM5.5 5V1.5Q7 0 7.5 1.5" /><path d="M12 5q4 1 2 7" strokeWidth="2" /></Icon>,
    help: <Icon c="none"><circle cx="8" cy="8" r="8" fill={BLUE} /><text x="8" y="13" fontSize="13" fontWeight="700" textAnchor="middle" fill="#fff">?</text></Icon>,
    redAlign: <Icon c="none"><path d="M2 2h8v5H2z" fill="#cc3d45" /><path d="M3 9.5h8v4H3z" fill="#fff" stroke="#cc3d45" /><path d="M1.5 1v14" stroke="#777" /></Icon>,
    more: <Icon w={7} h={8} c="#555"><path d="M1 .5h5" /><path d="M0 3h7L3.5 7z" fill="#555" stroke="none" /></Icon>,
    launcher: <Icon w={8} h={8} c="#8a8a8a"><path d="M.5 7V.5H7M3 3l4 4M7.5 3.5v4h-4" /></Icon>,
};

const Group = ({ title, width, pad, launcher, children }) => (
    <GroupBox $width={width}>
        <GroupBody $pad={pad}>{children}</GroupBody>
        <GroupFoot $launcher={launcher}>
            {title}
            {launcher && <button aria-label="更多选项">{icons.launcher}</button>}
        </GroupFoot>
    </GroupBox>
);

const Small = ({ icon, text, caret, off, wide }) => (
    <SmallButton $off={off} $wide={wide}>
        {icons[icon]}{text}{caret && <Caret c={off ? GREY : DARK} />}
    </SmallButton>
);

const Big = ({ icon, text, second, off, width }) => (
    <BigButton $off={off} $width={width}>
        <span className="pic">{icons[icon]}</span>
        <span className="line">{text}</span>
        <span className="line">{second}<Caret c={off ? GREY : DARK} /></span>
    </BigButton>
);

const Quick = ({ icon, split, off, open }) => (
    <QuickButton $split={split} $open={open} aria-label={icon}>
        {icons[icon] || <Shape name={icon} />}{split && <Caret c={off ? GREY : DARK} />}
    </QuickButton>
);

const tabs = ['iSlide', '插入', '设计', '切换', '动画', '幻灯片放映', '审阅', '视图', '加载项'];

const App = () => {
    return (
        <Window>
            <GlobalStyle />

            <TitleBar>
                <Splash width="500" height="41" viewBox="0 0 500 41" fill="#9f3b24">
                    <path d="M20 0h70v12q-35 5-68 0z" opacity=".5" />
                    <path d="M108 0h86q4 12-2 25-40 3-84 0-4-12 0-25z" opacity=".9" />
                    <path d="M230 0h125l24 6q-4 10-30 14-20 8-70 7-40-2-62-10 0-8 13-17z" opacity=".9" />
                    <path d="M438 8q8-8 18-4 12 6 44-2v22q-20 5-40 2-28-8-22-18z" opacity=".8" />
                </Splash>
                <TabList>
                    <FileTab>文件</FileTab>
                    <Tab $active>开始</Tab>
                    {tabs.map(t => <Tab key={t}>{t}</Tab>)}
                    <Search>
                        <Icon w={13} h={17} c="#fff"><path d="M4.5 12.5c0-3-3-4-3-7a5 5 0 0 1 10 0c0 3-3 4-3 7zM4.5 14.5h4M5.5 16.5h2" /></Icon>
                        搜索
                    </Search>
                </TabList>
                <Share>
                    <button>
                        <Icon c="#fff"><path d="M1.5 4v10.5h12V12M4 10.5q1-5 6-5v-3l5 5-5 4.5V9q-4 0-6 1.5z" /></Icon>
                        <span>共享(<u>S</u>)</span>
                    </button>
                    <button aria-label="批注"><Icon w={17} c="#fff"><path d="M.5 1.5h16v10h-10l-3 4v-4h-3z" /></Icon></button>
                </Share>
            </TitleBar>

            <Ribbon>
                <Group title="剪贴板" width={115} launcher>
                    <Big icon="paste" text="粘贴" width={47} />
                    <Stack>
                        <Small icon="cut" text="剪切" off />
                        <Small icon="copy" text="复制" off caret wide />
                        <Small icon="brush" text="格式刷" off />
                    </Stack>
                </Group>
                <Group title="幻灯片" width={121} pad={4}>
                    <Big icon="newSlide" text="新建" second="幻灯片" width={49} />
                    <Stack $pad={4}>
                        <Small icon="layout" text="版式" caret />
                        <Small icon="reset" text="重置" />
                        <Small icon="section" text="节" caret />
                    </Stack>
                </Group>
                <Group title="字体" width={262} pad={5} launcher>
                    <Rows>
                        <Row>
                            <SelectBox $width={129}><select aria-label="字体"><option></option></select><Caret c={GREY} /></SelectBox>
                            <SelectBox $width={51}><select aria-label="字号"><option>138</option></select><Caret c={GREY} /></SelectBox>
                            <Tool aria-label="增大字号"><Icon c="#a6a6a6"><path d="M2 14L6 4l4 10M3.5 10.5h5" strokeWidth="1.5" /><path d="M10 4h5l-2.5-3z" fill={GREY} stroke="none" /></Icon></Tool>
                            <Tool aria-label="减小字号"><Icon c="#a6a6a6"><path d="M2.5 14L6 6l3.5 8M4 11.5h4" strokeWidth="1.5" /><path d="M10 1h5l-2.5 3z" fill={GREY} stroke="none" /></Icon></Tool>
                            <Divider />
                            <Tool aria-label="清除格式">{icons.eraser}</Tool>
                        </Row>
                        <Row>
                            <Tool $w={20}><b>B</b></Tool>
                            <Tool><i>I</i></Tool>
                            <Tool><u>U</u></Tool>
                            <Tool><b>S</b></Tool>
                            <Tool><s>abc</s></Tool>
                            <Tool $w={34} aria-label="字符间距">{icons.kerning}<Caret c={GREY} /></Tool>
                            <Tool $w={32}>Aa<Caret c={GREY} /></Tool>
                            <Divider />
                            <Tool $w={32} aria-label="突出显示">{icons.marker}<Caret c={GREY} /></Tool>
                            <Tool $w={34}><b>A</b><Caret c={GREY} /></Tool>
                        </Row>
                    </Rows>
                </Group>
                <Group title="段落" width={301} pad={4} launcher>
                    <Rows>
                        <Row>
                            <Tool $w={34}>{icons.bullets}<Caret c={GREY} /></Tool>
                            <Tool $w={34}>{icons.numbers}<Caret c={GREY} /></Tool>
                            <Divider />
                            <Tool>{icons.dedent}</Tool>
                            <Tool>{icons.indent}</Tool>
                            <Divider />
                            <Tool $w={32}>{icons.spacing}<Caret c={GREY} /></Tool>
                        </Row>
                        <Row>
                            <Tool>{icons.alignL}</Tool>
                            <Tool>{icons.alignC}</Tool>
                            <Tool>{icons.alignR}</Tool>
                            <Tool>{icons.justify}</Tool>
                            <Tool>{icons.spread}</Tool>
                            <Divider />
                            <Tool $w={34}>{icons.columns}<Caret c={GREY} /></Tool>
                        </Row>
                    </Rows>
                    <Stack $pad={4}>
                        <Small icon="textDir" text="文字方向" off caret />
                        <Small icon="alignText" text="对齐文本" off caret />
                        <Small icon="smartArt" text="转换为 SmartArt" off caret />
                    </Stack>
                </Group>
                <Group title="绘图" width={331} pad={5} launcher>
                    <Gallery>
                        <Shapes list={recent} cols={6} />
                        <GalleryScroll>
                            <button aria-label="上一行"><Caret up c="#c0c0c0" /></button>
                            <button aria-label="下一行"><Caret /></button>
                            <button aria-label="其他">{icons.more}</button>
                        </GalleryScroll>
                    </Gallery>
                    <Big icon="arrange" text="排列" width={47} />
                    <Big icon="styles" text="快速样式" off width={48} />
                    <Stack $pad={5}>
                        <Small icon="fill" text="形状填充" off caret />
                        <Small icon="outline" text="形状轮廓" off caret />
                        <Small icon="effect" text="形状效果" off caret />
                    </Stack>
                </Group>
                <Group title="编辑" width={75} pad={8}>
                    <Stack>
                        <Small icon="find" text="查找" />
                        <Small icon="replace" text="替换" caret wide />
                        <Small icon="select" text="选择" caret />
                    </Stack>
                </Group>
                <Collapse aria-label="折叠功能区"><Icon w={10} h={8}><path d="M1 6l4-4 4 4" strokeWidth="2" /></Icon></Collapse>
            </Ribbon>

            <QuickBar>
                <AutoSave>
                    自动保存
                    <Switch role="switch" aria-checked="false">关</Switch>
                </AutoSave>
                <Quick icon="save" />
                <Quick icon="undo" split />
                <Quick icon="redo" />
                <Quick icon="newSmall" split />
                <MenuAnchor>
                    <Quick icon="shapes" split open />
                    <Menu>
                        {sections.map(([title, list]) => (
                            <React.Fragment key={title}>
                                <h3>{title}</h3>
                                <Shapes list={list} cols={12} />
                            </React.Fragment>
                        ))}
                        <Grip width="7" height="7" viewBox="0 0 7 7" fill="#999">
                            <path d="M4 0h2v2H4zM4 4h2v2H4zM0 4h2v2H0z" />
                        </Grip>
                    </Menu>
                    <Pointer width="13" height="20" viewBox="0 0 13 20" fill="#fff" stroke="#111">
                        <path d="M.5 1v15L4 12.5l2.5 6 3-1.5L7 11.5h5z" />
                    </Pointer>
                </MenuAnchor>
                <Quick icon="back" />
                <Quick icon="pane" />
                <Quick icon="layout" split />
                <Quick icon="align" split />
                <Quick icon="crop" />
                <Quick icon="union" split off />
                <Quick icon="clip" />
                <Quick icon="contrast" />
                <Quick icon="arrangeSmall" split />
                <Quick icon="textBox" split />
                <GuideCheck><input type="checkbox" />参考线</GuideCheck>
                <Quick icon="flip" split />
                <Quick icon="size" />
                <Quick icon="bucket" split off />
                <Quick icon="help" />
                <Quick icon="redAlign" />
                <Quick icon="more" />
            </QuickBar>

            <Main>
                <Thumbnails>
                    <Icon w={6} h={9}><path d="M1 1l3.5 3.5L1 8" strokeWidth="2" /></Icon>
                    <span>缩略图</span>
                </Thumbnails>
                <Desk>
                    <Slide><h1>音乐</h1></Slide>
                </Desk>
                <ScrollBar>
                    <button className="end" aria-label="向上"><Caret up /></button>
                    <div className="track" />
                    <div className="thumb" />
                    <button className="end" aria-label="向下"><Caret /></button>
                    <button aria-label="上一张幻灯片"><Icon w={7} h={8} c="none"><path d="M0 4l3.5-4L7 4zM0 8l3.5-4L7 8z" fill="#666" /></Icon></button>
                    <button aria-label="下一张幻灯片"><Icon w={7} h={8} c="none"><path d="M0 0h7L3.5 4zM0 4h7L3.5 8z" fill="#666" /></Icon></button>
                </ScrollBar>
            </Main>
            <PaneEdge />

            <StatusBar>
                <StatusText>幻灯片 第 4 张，共 4 张</StatusText>
                <StatusButton $w={42} aria-label="拼写检查">
                    <Icon w={15} h={14}><path d="M6.5 12.5v-10q-2-1-5.5-1v10q4 0 5.5 1 1-1 3-1M6.5 2.5q2-1 6-1v2M8.5 7.5l2 2.5 4-5" /></Icon>
                </StatusButton>
                <StatusText>中文(中国)</StatusText>
                <Spacer />
                <StatusButton $w={78}>
                    <Icon w={11} h={11}><path d="M0 5.5h11M0 8.5h11M0 10.5h11" /><path d="M2 4h7L5.5 0z" fill={DARK} stroke="none" /></Icon>
                    备注
                </StatusButton>
                <StatusButton $active aria-label="普通视图"><Icon w={15} h={13}><path d="M.5 .5h14v12H.5zM3.5 .5v12M3.5 10h11M6.5 3.5h5v3h-5z" /></Icon></StatusButton>
                <StatusButton aria-label="幻灯片浏览"><Icon w={15} h={13}><path d="M.5 .5h5v4h-5zM9.5 .5h5v4h-5zM.5 8.5h5v4h-5zM9.5 8.5h5v4h-5z" /></Icon></StatusButton>
                <StatusButton aria-label="阅读视图"><Icon w={13} h={13}><path d="M6.5 2.5v10l-1.5-1H.5V.5H5zM6.5 2.5L8 .5h4.5v11H8l-1.5 1M2 3.5h3M2 5.5h3M2 7.5h3M2 9.5h3M8 3.5h3M8 5.5h3M8 7.5h3M8 9.5h3" /></Icon></StatusButton>
                <StatusButton aria-label="幻灯片放映"><Icon w={13} h={13}><path d="M0 .5h13M1.5 .5v6h10v-6M6.5 6.5v5M3.5 12h6" /></Icon></StatusButton>
                <StatusButton $w={16} aria-label="缩小"><Icon w={7} h={7}><path d="M0 3.5h7" strokeWidth="2" /></Icon></StatusButton>
                <Zoom type="range" defaultValue="50" aria-label="缩放" />
                <StatusButton $w={12} aria-label="放大"><Icon w={7} h={7}><path d="M0 3.5h7M3.5 0v7" strokeWidth="2" /></Icon></StatusButton>
                <StatusButton $w={50}>100%</StatusButton>
                <StatusButton $w={22} aria-label="适应窗口"><Icon w={13} h={13}><path d="M.5 .5h12v12H.5zM6.5 2v3M6.5 8v3M2 6.5h3M8 6.5h3" strokeDasharray="3 1" /></Icon></StatusButton>
            </StatusBar>
        </Window>
    );
};

export default App;
